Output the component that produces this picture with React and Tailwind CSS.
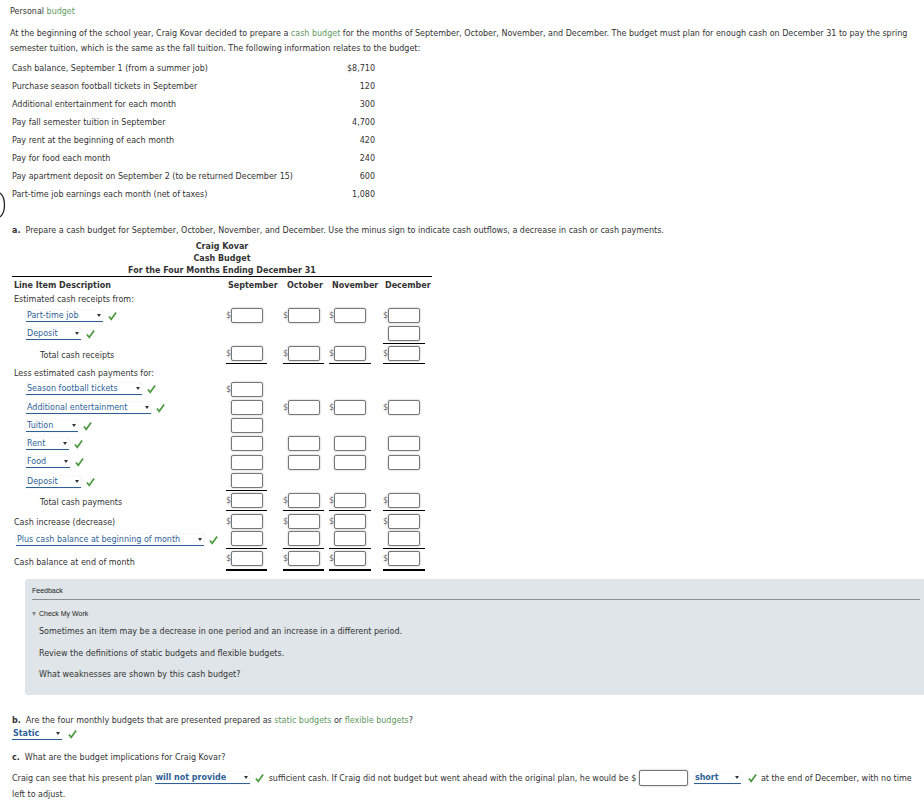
const infoRows = [
  ["Cash balance, September 1 (from a summer job)", "$8,710"],
  ["Purchase season football tickets in September", "120"],
  ["Additional entertainment for each month", "300"],
  ["Pay fall semester tuition in September", "4,700"],
  ["Pay rent at the beginning of each month", "420"],
  ["Pay for food each month", "240"],
  ["Pay apartment deposit on September 2 (to be returned December 15)", "600"],
  ["Part-time job earnings each month (net of taxes)", "1,080"],
]

const Check = ({ className = "" }) => (
  <svg viewBox="0 0 10 10" className={`inline-block h-[10px] w-[9px] shrink-0 ${className}`}>
    <path d="M1 5.5 L3.6 8.6 L9 1.2" fill="none" stroke="#4c9a3f" strokeWidth="1.9" />
  </svg>
)

const Dropdown = ({ label, width, bold, className = "" }) => (
  <span
    style={{ width }}
    className={`relative inline-block h-[12px] rounded-t-[3px] border-b border-[#2f5f97] bg-white pl-[1px] text-left align-middle leading-[12px] text-[#2f5f97] shadow-[0_0_1px_#bbb] ${bold ? "font-bold" : ""} ${className}`}
  >
    {label}
    <span className="absolute right-[2px] top-[4px] h-0 w-0 border-x-[2.5px] border-t-[3px] border-x-transparent border-t-[#333]" />
  </span>
)

const Cell = ({ dollar, input, line, width = "w-[41px]" }) => (
  <div className={width}>
    {input && (
      <div className="flex h-[15px] items-center">
        <span className="w-[5px] text-[8px] leading-none text-[#666]">{dollar ? "$" : ""}</span>
        <input className="h-[15px] w-[32px] rounded-[2px] border border-[#777] bg-white shadow-[0_0_2px_#aaa]" />
      </div>
    )}
    {line === 1 && <div className="mt-[2px] h-px bg-black" />}
    {line === 2 && <div className="mt-[3px] h-[2px] bg-black" />}
  </div>
)

const Row = ({ h, children, cells = [] }) => (
  <div style={{ height: h }} className="grid grid-cols-[214px_57px_46px_54px_42px]">
    <div>{children}</div>
    {[0, 1, 2, 3].map((i) => (
      <div key={i}>{cells[i] && <Cell width={i >= 2 ? "w-[42px]" : "w-[41px]"} {...cells[i]} />}</div>
    ))}
  </div>
)

const d = { dollar: true, input: true }
const b = { input: true }
const dl = { dollar: true, input: true, line: 1 }
const bl = { input: true, line: 1 }
const dd = { dollar: true, input: true, line: 2 }

const Pick = ({ label, width, left = "ml-[14px]", gap = "ml-[5px]", top = "" }) => (
  <div className={`flex h-[15px] items-center ${left} ${top}`}>
    <Dropdown label={label} width={width} />
    <Check className={gap} />
  </div>
)

const Green = ({ children }) => <span className="text-[#5f9a5f]">{children}</span>

export default function App() {
  return (
    <div className="relative h-[810px] w-[924px] overflow-hidden bg-white pt-[4px] font-['DejaVu_Sans',Verdana,sans-serif] text-[8px] leading-[15px] text-[#333]">
      <svg className="absolute left-0 top-[192px] h-[26px] w-[6px]" viewBox="0 0 6 26">
        <path d="M0 1 C6 6 6 20 0 25" fill="none" stroke="#222" strokeWidth="1.3" />
      </svg>

      <p className="ml-[10px]">
        Personal <Green>budget</Green>
      </p>
      <p className="ml-[10px] mt-[7px] w-[905px]">
        At the beginning of the school year, Craig Kovar decided to prepare a <Green>cash budget</Green> for the months of
        September, October, November, and December. The budget must plan for enough cash on December 31 to pay the spring
        semester tuition, which is the same as the fall tuition. The following information relates to the budget:
      </p>

      <div className="ml-[12px] mt-[3px] w-[363px]">
        {infoRows.map(([label, value]) => (
          <div key={label} className="flex h-[18px] items-center justify-between">
            <span>{label}</span>
            <span>{value}</span>
          </div>
        ))}
      </div>

      <p className="ml-[12px] mt-[20px]">
        <b>a.</b>&nbsp; Prepare a cash budget for September, October, November, and December. Use the minus sign to indicate
        cash outflows, a decrease in cash or cash payments.
      </p>

      <div className="ml-[12px] mt-[3px] w-[420px]">
        <div className="h-[36px] border-b border-black text-center font-bold leading-[12px]">
          <div>Craig Kovar</div>
          <div>Cash Budget</div>
          <div>For the Four Months Ending December 31</div>
        </div>
        <div className="mt-[1px] grid h-[14px] grid-cols-[216px_59px_45px_53px_47px] items-center font-bold">
          <span className="pl-[2px]">Line Item Description</span>
          <span>September</span>
          <span>October</span>
          <span>November</span>
          <span>December</span>
        </div>
        <div className="flex h-[14px] items-center pl-[2px]">Estimated cash receipts from:</div>
        <div className="h-[2px]" />

        <Row h={18} cells={[d, d, d, d]}>
          <Pick label="Part-time job" width={77} />
        </Row>
        <Row h={20} cells={[null, null, null, bl]}>
          <Pick label="Deposit" width={55} />
        </Row>
        <Row h={20} cells={[dl, dl, dl, dl]}>
          <div className="flex h-[15px] items-center pl-[28px] pt-[3px]">Total cash receipts</div>
        </Row>
        <Row h={16}>
          <div className="flex h-[15px] items-center pl-[2px]">Less estimated cash payments for:</div>
        </Row>
        <Row h={18} cells={[d]}>
          <Pick label="Season football tickets" width={116} top="-mt-[1px]" />
        </Row>
        <Row h={18} cells={[b, d, d, d]}>
          <Pick label="Additional entertainment" width={125} />
        </Row>
        <Row h={18} cells={[b]}>
          <Pick label="Tuition" width={52} />
        </Row>
        <Row h={19} cells={[b, b, b, b]}>
          <Pick label="Rent" width={43} />
        </Row>
        <Row h={18} cells={[b, b, b, b]}>
          <Pick label="Food" width={44} top="-mt-[1px]" />
        </Row>
        <Row h={20} cells={[bl]}>
          <Pick label="Deposit" width={55} top="mt-[1px]" />
        </Row>
        <Row h={21} cells={[dl, dl, dl, dl]}>
          <div className="flex h-[15px] items-center pl-[28px] pt-[3px]">Total cash payments</div>
        </Row>
        <Row h={17} cells={[d, d, d, d]}>
          <div className="flex h-[15px] items-center pl-[2px] pt-[1px]">Cash increase (decrease)</div>
        </Row>
        <Row h={20} cells={[bl, bl, bl, bl]}>
          <Pick label="Plus cash balance at beginning of month" width={188} left="ml-[4px]" top="mt-[1px]" />
        </Row>
        <Row h={20} cells={[dd, dd, dd, dd]}>
          <div className="mt-[4px] flex h-[15px] items-center pl-[2px]">Cash balance at end of month</div>
        </Row>
      </div>

      <div className="ml-[25px] mt-[8px] h-[116px] rounded-l-[3px] bg-[#dfe5e8] pl-[7px] pr-[4px] pt-[6px]">
        <div className="border-b border-[#8a8f92] pb-[3px] font-['Liberation_Sans',Arial,sans-serif] text-[7px] leading-[11px] text-[#222]">
          Feedback
        </div>
        <div className="mt-[8px] flex h-[11px] items-center font-['Liberation_Sans',Arial,sans-serif] text-[7px] text-[#222]">
          <span className="mr-[3px] h-0 w-0 border-x-[2px] border-t-[4px] border-x-transparent border-t-[#888]" />
          Check My Work
        </div>
        <div className="ml-[7px]">
          <p className="mt-[5px]">Sometimes an item may be a decrease in one period and an increase in a different period.</p>
          <p className="mt-[7px]">Review the definitions of static budgets and flexible budgets.</p>
          <p className="mt-[6px]">What weaknesses are shown by this cash budget?</p>
        </div>
      </div>

      <p className="ml-[12px] mt-[18px]">
        <b>b.</b>&nbsp; Are the four monthly budgets that are presented prepared as <Green>static budgets</Green> or{" "}
        <Green>flexible budgets</Green>?
      </p>
      <div className="ml-[12px] flex h-[12px] items-center">
        <Dropdown label="Static" width={50} bold />
        <Check className="ml-[6px]" />
      </div>
      <p className="ml-[12px] mt-[10px]">
        <b>c.</b>&nbsp; What are the budget implications for Craig Kovar?
      </p>
      <p className="ml-[12px] mt-[5px] w-[905px] leading-[16px]">
        Craig can see that his present plan <Dropdown label="will not provide" width={95} bold />
        <Check className="mx-[5px] align-middle" />
        sufficient cash. If Craig did not budget but went ahead with the original plan, he would be ${" "}
        <input className="h-[16px] w-[49px] rounded-[2px] border border-[#777] bg-white align-middle shadow-[0_0_2px_#aaa]" />
        <Dropdown label="short" width={47} bold className="ml-[6px]" />
        <Check className="ml-[7px] mr-[4px] align-middle" />
        at the end of December, with no time left to adjust.
      </p>
    </div>
  )
}
